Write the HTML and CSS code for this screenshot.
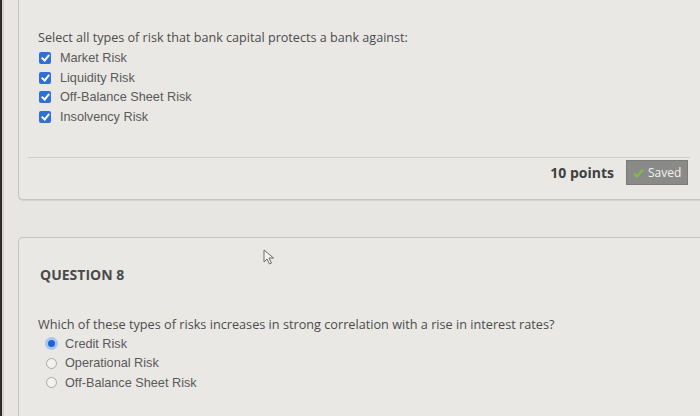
FILE: index.html
```html
<!DOCTYPE html>
<html lang="en">
<head>
  <meta charset="UTF-8">
  <title>Quiz</title>
  <link rel="stylesheet" href="styles.css">
</head>
<body>
  <div class="screen">
    <div class="edge"></div>
    <div class="page">
      <div class="panel done">
        <p class="question">Select all types of risk that bank capital protects a bank against:</p>
        <ul class="choices">
          <li><span class="check"></span>Market Risk</li>
          <li><span class="check"></span>Liquidity Risk</li>
          <li><span class="check"></span>Off-Balance Sheet Risk</li>
          <li><span class="check"></span>Insolvency Risk</li>
        </ul>
        <div class="foot">
          <span class="points">10 points</span>
          <span class="saved">
            <svg width="11" height="10" viewBox="0 0 11 10"><path d="M1 5.5 L4 8.5 L10 1.5" fill="none" stroke="#7cc13f" stroke-width="2"/></svg>
            Saved
          </span>
        </div>
      </div>

      <div class="panel current">
        <svg class="cursor" width="12" height="16" viewBox="0 0 12 16">
          <path d="M1 1 L1 13 L4 10 L6.5 15 L8.5 14 L6 9 L10.5 9 Z" fill="#f4f4f2" stroke="#6a6a6a" stroke-width="1"/>
        </svg>
        <h2 class="qtitle">QUESTION 8</h2>
        <p class="question">Which of these types of risks increases in strong correlation with a rise in interest rates?</p>
        <ul class="choices radios">
          <li><span class="radio on"></span>Credit Risk</li>
          <li><span class="radio"></span>Operational Risk</li>
          <li><span class="radio"></span>Off-Balance Sheet Risk</li>
        </ul>
      </div>
    </div>
  </div>
</body>
</html>
```

FILE: styles.css
```css
* {
  padding: 0;
  margin: 0;
  box-sizing: border-box;
}
body {
  width: 700px;
  height: 416px;
  overflow: hidden;
  background: #e7e6e2;
  font-family: "Open Sans", "Liberation Sans", sans-serif;
  color: #4a4a4a;
}
.screen {
  display: flex;
  height: 416px;
}
.edge {
  width: 4px;
  background: #2c2c2e;
  border-right: 2px solid #d9cfcb;
}
.page {
  flex: 1;
  padding-left: 14px;
}
.panel {
  border: 1px solid #c4c4c0;
  border-right: none;
  background: #e9e8e5;
}
.panel.done {
  border-top: none;
  border-radius: 0 0 0 5px;
  height: 200px;
  padding: 28px 0 0 19px;
  box-shadow: 0 1px 0 #d2d2ce;
}
.question {
  font-size: 12.6px;
  line-height: 20px;
  color: #4c4c4c;
}
.current .question {
  font-size: 12.7px;
}
.choices {
  list-style: none;
  font-family: "Liberation Sans", Arial, sans-serif;
  font-size: 12.7px;
  color: #5a5a5a;
}
.choices li {
  display: flex;
  align-items: center;
  height: 19.7px;
}
.check {
  width: 12px;
  height: 12px;
  margin: 0 9px 0 1px;
  border-radius: 2px;
  background: #2e6fd8;
  position: relative;
}
.check::after {
  content: '';
  position: absolute;
  left: 4px;
  top: 1px;
  width: 3px;
  height: 6px;
  border: solid #fff;
  border-width: 0 2px 2px 0;
  transform: rotate(40deg);
}
.foot {
  margin: 30px 10px 0 -10px;
  border-top: 1px solid #cdcdc9;
  display: flex;
  justify-content: flex-end;
  align-items: center;
  height: 31px;
}
.points {
  font-size: 14px;
  font-weight: 700;
  color: #3f3f3f;
  margin-right: 12px;
}
.saved {
  display: flex;
  align-items: center;
  gap: 4px;
  width: 62px;
  height: 25px;
  padding-left: 6px;
  margin-right: 2px;
  background: #8a8a88;
  border: 1px solid #7b7b79;
  color: #f2f2f0;
  font-size: 12px;
}
.panel.current {
  position: relative;
  margin-top: 37px;
  height: 179px;
  border-bottom: none;
  border-radius: 5px 0 0 0;
  padding: 27px 0 0 21px;
}
.cursor {
  position: absolute;
  left: 244px;
  top: 11px;
}
.qtitle {
  font-size: 14px;
  font-weight: 700;
  color: #4a4a4a;
  line-height: 20px;
  margin-bottom: 29px;
}
.panel.current .question {
  margin-left: -2px;
}
.radios li {
  height: 19.5px;
}
.radio {
  width: 11px;
  height: 11px;
  margin: 0 8px 0 6px;
  border-radius: 50%;
  border: 1px solid #a9a9a7;
  background: #f2f2f0;
}
.radio.on {
  width: 13px;
  height: 13px;
  margin: 0 7px 0 5px;
  border: 3px solid #a8c6f0;
  background: #1f62d6;
}
```
